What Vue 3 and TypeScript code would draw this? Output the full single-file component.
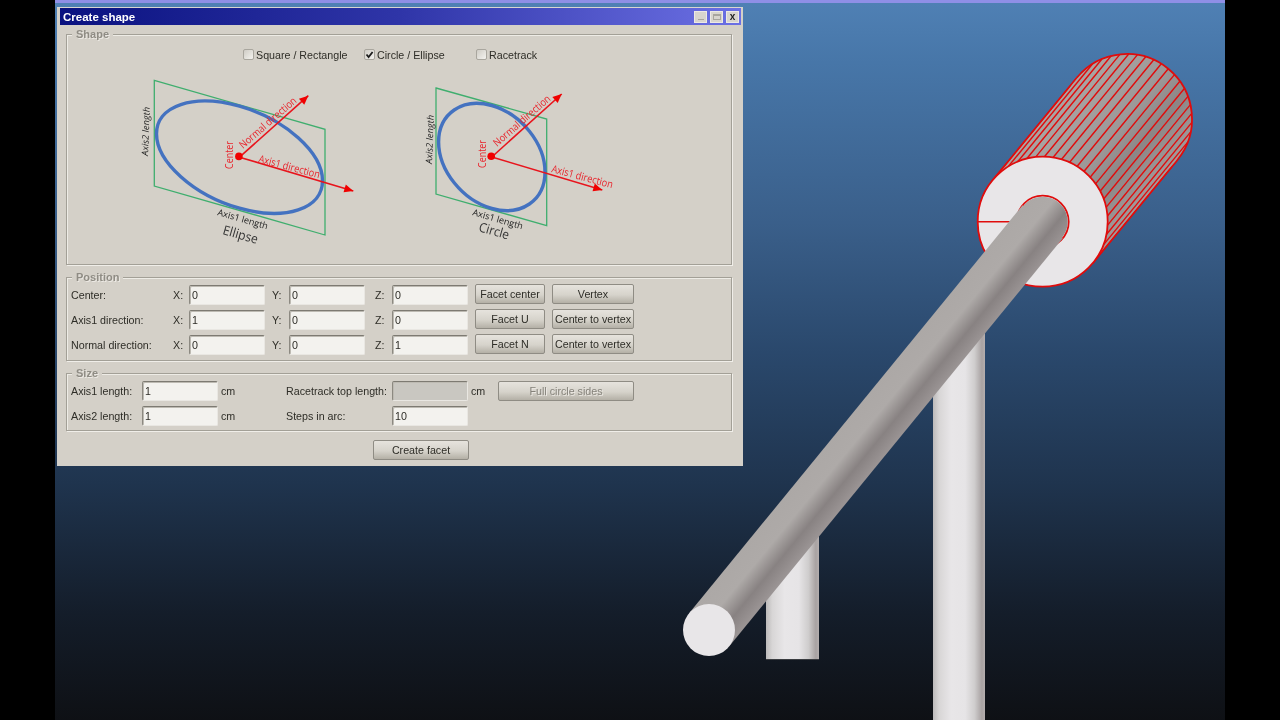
<script setup lang="ts">
	interface Label {
		text: string;
		x: number;
		y: number;
		rot: number;
		size: number;
		len: number;
		kind: string;
	}

	interface Diagram {
		box: string;
		cx: number;
		cy: number;
		ux: number;
		uy: number;
		vy: number;
		normal: [number, number];
		axis: [number, number];
		labels: Label[];
	}

	const diagrams: Diagram[] = [
		{
			box: "154.3,80.3 325,129.3 325,235 154.3,186",
			cx: 239.5,
			cy: 157.2,
			ux: 83,
			uy: 23.5,
			vy: 51,
			normal: [308.3, 95.7],
			axis: [353.3, 191],
			labels: [
				{ text: "Normal direction", x: 243, y: 149, rot: -41, size: 10.5, len: 72, kind: "red" },
				{ text: "Axis1 direction", x: 258, y: 162, rot: 15, size: 10.5, len: 63, kind: "red" },
				{ text: "Center", x: 233, y: 169, rot: -90, size: 10.5, len: 28, kind: "red" },
				{ text: "Axis2 length", x: 148, y: 156, rot: -88, size: 9, len: 49, kind: "slant" },
				{ text: "Axis1 length", x: 217, y: 215, rot: 16, size: 9, len: 52, kind: "dark" },
				{ text: "Ellipse", x: 222, y: 234, rot: 16, size: 13, len: 36, kind: "name" },
			],
		},
		{
			box: "436,88 546.7,119 546.7,225.7 436,194",
			cx: 491.8,
			cy: 157,
			ux: 53.2,
			uy: 15,
			vy: 51.5,
			normal: [561.7, 94],
			axis: [602.3, 190],
			labels: [
				{ text: "Normal direction", x: 497, y: 147, rot: -41, size: 10.5, len: 72, kind: "red" },
				{ text: "Axis1 direction", x: 551, y: 172, rot: 15, size: 10.5, len: 63, kind: "red" },
				{ text: "Center", x: 486, y: 168, rot: -90, size: 10.5, len: 28, kind: "red" },
				{ text: "Axis2 length", x: 432, y: 164, rot: -88, size: 9, len: 49, kind: "slant" },
				{ text: "Axis1 length", x: 472, y: 215, rot: 16, size: 9, len: 52, kind: "dark" },
				{ text: "Circle", x: 478, y: 231, rot: 16, size: 13, len: 31, kind: "name" },
			],
		},
	];

	const position_rows = [
		{ label: "Center:", x: "0", y: "0", z: "0", b1: "Facet center", b2: "Vertex" },
		{ label: "Axis1 direction:", x: "1", y: "0", z: "0", b1: "Facet U", b2: "Center to vertex" },
		{ label: "Normal direction:", x: "0", y: "0", z: "1", b1: "Facet N", b2: "Center to vertex" },
	];

	function arrow_head(from: number[], to: number[]): string {
		const a = Math.atan2(to[1] - from[1], to[0] - from[0]);
		const l = 9;
		const w = 4;
		const bx = to[0] - l * Math.cos(a);
		const by = to[1] - l * Math.sin(a);
		const px = w * Math.sin(a);
		const py = w * Math.cos(a);
		return `${to[0]},${to[1]} ${bx + px},${by - py} ${bx - px},${by + py}`;
	}

	// the sleeve: front cap and back cap share a radius, wires run between them
	const front = { x: 1042.7, y: 221.7 };
	const back = { x: 1127, y: 119 };
	const radius = 65;
	const axis_len = Math.hypot(back.x - front.x, back.y - front.y);
	const dir = { x: (back.x - front.x) / axis_len, y: (back.y - front.y) / axis_len };
	const perp = { x: -dir.y, y: dir.x };

	// wires are spaced somewhere between even and true cylinder projection
	const wire_count = 20;
	const sleeve_wires = Array.from({ length: wire_count + 1 }, (_, i) => {
		const t = i / wire_count;
		const s = 0.55 * Math.sin(-Math.PI / 2 + t * Math.PI) + 0.45 * (2 * t - 1);
		const c = Math.sqrt(Math.max(0, 1 - s * s));
		const ox = radius * (c * dir.x + s * perp.x);
		const oy = radius * (c * dir.y + s * perp.y);
		return { x1: front.x + ox, y1: front.y + oy, x2: back.x + ox, y2: back.y + oy };
	});

	const sleeve_body = [
		[front.x + perp.x * radius, front.y + perp.y * radius],
		[back.x + perp.x * radius, back.y + perp.y * radius],
		[back.x - perp.x * radius, back.y - perp.y * radius],
		[front.x - perp.x * radius, front.y - perp.y * radius],
	]
		.map((p) => p.join(","))
		.join(" ");

	const rod_r = 26;
	const rod_end = { x: 709, y: 630 };
	const rod_body = [
		[rod_end.x + perp.x * rod_r, rod_end.y + perp.y * rod_r],
		[front.x + perp.x * rod_r, front.y + perp.y * rod_r],
		[front.x - perp.x * rod_r, front.y - perp.y * rod_r],
		[rod_end.x - perp.x * rod_r, rod_end.y - perp.y * rod_r],
	]
		.map((p) => p.join(","))
		.join(" ");
</script>

<template>
	<div class="screen">
		<div class="viewport">
			<svg class="scene" viewBox="55 0 1170 720" width="1170" height="720">
				<defs>
					<linearGradient id="pillar" x1="0" x2="1" y1="0" y2="0">
						<stop offset="0" stop-color="#bcbaba" />
						<stop offset="0.12" stop-color="#d8d6d6" />
						<stop offset="0.35" stop-color="#e8e6e8" />
						<stop offset="0.62" stop-color="#e6e4e6" />
						<stop offset="0.8" stop-color="#cfcdcd" />
						<stop offset="0.94" stop-color="#a8a2a2" />
						<stop offset="1" stop-color="#b4aeae" />
					</linearGradient>
					<linearGradient
						id="rod"
						gradientUnits="userSpaceOnUse"
						:x1="front.x - perp.x * rod_r"
						:y1="front.y - perp.y * rod_r"
						:x2="front.x + perp.x * rod_r"
						:y2="front.y + perp.y * rod_r"
					>
						<stop offset="0" stop-color="#aca8a6" />
						<stop offset="0.4" stop-color="#aeaaa8" />
						<stop offset="0.72" stop-color="#888282" />
						<stop offset="1" stop-color="#9a9494" />
					</linearGradient>
					<linearGradient
						id="sleeve"
						gradientUnits="userSpaceOnUse"
						:x1="front.x - perp.x * radius"
						:y1="front.y - perp.y * radius"
						:x2="front.x + perp.x * radius"
						:y2="front.y + perp.y * radius"
					>
						<stop offset="0" stop-color="#aaa6a4" />
						<stop offset="0.5" stop-color="#9c9898" />
						<stop offset="0.72" stop-color="#8c8686" />
						<stop offset="1" stop-color="#a29c9c" />
					</linearGradient>
				</defs>

				<rect x="766" y="530" width="53" height="129" fill="url(#pillar)" />
				<line x1="766" y1="659.5" x2="819" y2="659.5" stroke="#3a3c40" stroke-width="1" />
				<rect x="933" y="320" width="52" height="400" fill="url(#pillar)" />

				<polygon :points="sleeve_body" fill="url(#sleeve)" stroke="#e00c0c" stroke-width="1.5" />
				<circle :cx="back.x" :cy="back.y" :r="radius" fill="url(#sleeve)" />
				<line
					v-for="(w, i) in sleeve_wires"
					:key="i"
					:x1="w.x1"
					:y1="w.y1"
					:x2="w.x2"
					:y2="w.y2"
					stroke="#e00c0c"
					stroke-width="1.4"
				/>
				<path
					:d="`M${back.x + perp.x * radius} ${back.y + perp.y * radius} A${radius} ${radius} 0 0 0 ${back.x - perp.x * radius} ${back.y - perp.y * radius}`"
					fill="none"
					stroke="#e00c0c"
					stroke-width="1.8"
				/>

				<circle :cx="front.x" :cy="front.y" :r="radius" fill="#e8e6e8" stroke="#e00c0c" stroke-width="1.8" />
				<line x1="978" y1="221.7" x2="1012" y2="221.7" stroke="#e00c0c" stroke-width="1.5" />
				<circle :cx="front.x" :cy="front.y" :r="rod_r" fill="#e8e6e8" stroke="#e00c0c" stroke-width="1.8" />

				<polygon :points="rod_body" fill="url(#rod)" />
				<circle :cx="front.x" :cy="front.y" :r="rod_r - 1" fill="url(#rod)" />
				<circle :cx="rod_end.x" :cy="rod_end.y" :r="rod_r" fill="#e8e6e8" />
			</svg>

			<div class="dialog">
				<div class="titlebar">
					<span class="title">Create shape</span>
					<div class="win_buttons">
						<span class="win_btn faded"><i class="glyph_min"></i></span>
						<span class="win_btn faded"><i class="glyph_max"></i></span>
						<span class="win_btn close">x</span>
					</div>
				</div>

				<div class="body">
					<section class="group group_shape">
						<span class="legend">Shape</span>
						<div class="checks">
							<label class="check"><span class="box"></span>Square / Rectangle</label>
							<label class="check">
								<span class="box">
									<svg viewBox="0 0 11 11" width="11" height="11">
										<path d="M2.5 5.5 L4.6 8 L8.6 3" fill="none" stroke="#1c1c1c" stroke-width="1.8" />
									</svg>
								</span>
								Circle / Ellipse
							</label>
							<label class="check"><span class="box"></span>Racetrack</label>
						</div>
						<svg class="diagram" viewBox="67 65 664 199" width="664" height="199">
							<g v-for="d in diagrams" :key="d.box">
								<polygon :points="d.box" fill="none" stroke="#3fae6e" stroke-width="1.3" />
								<ellipse
									cx="0"
									cy="0"
									rx="1"
									ry="1"
									fill="none"
									stroke="#4472c0"
									stroke-width="3.4"
									vector-effect="non-scaling-stroke"
									:transform="`matrix(${d.ux} ${d.uy} 0 ${d.vy} ${d.cx} ${d.cy})`"
								/>
								<line :x1="d.cx" :y1="d.cy" :x2="d.normal[0]" :y2="d.normal[1]" stroke="#e8141c" stroke-width="1.6" />
								<line :x1="d.cx" :y1="d.cy" :x2="d.axis[0]" :y2="d.axis[1]" stroke="#e8141c" stroke-width="1.6" />
								<polygon :points="arrow_head([d.cx, d.cy], d.normal)" fill="#f00000" />
								<polygon :points="arrow_head([d.cx, d.cy], d.axis)" fill="#f00000" />
								<circle :cx="d.cx - 0.6" :cy="d.cy - 0.8" r="3.8" fill="#f00000" />
								<text
									v-for="t in d.labels"
									:key="t.text"
									:class="['tag', t.kind]"
									:font-size="t.size"
									:textLength="t.len"
									lengthAdjust="spacingAndGlyphs"
									:transform="`translate(${t.x} ${t.y}) rotate(${t.rot})`"
								>{{ t.text }}</text>
							</g>
						</svg>
					</section>

					<section class="group group_position">
						<span class="legend">Position</span>
						<div class="pos_grid">
							<template v-for="row in position_rows" :key="row.label">
								<span>{{ row.label }}</span>
								<span>X:</span>
								<input class="field" :value="row.x" readonly />
								<span class="axis_y">Y:</span>
								<input class="field" :value="row.y" readonly />
								<span class="axis_z">Z:</span>
								<input class="field" :value="row.z" readonly />
								<button class="btn">{{ row.b1 }}</button>
								<button class="btn">{{ row.b2 }}</button>
							</template>
						</div>
					</section>

					<section class="group group_size">
						<span class="legend">Size</span>
						<div class="size_grid">
							<span>Axis1 length:</span>
							<input class="field" value="1" readonly />
							<span class="unit">cm</span>
							<span>Racetrack top length:</span>
							<input class="field off" disabled />
							<span class="unit">cm</span>
							<button class="btn off" disabled>Full circle sides</button>

							<span>Axis2 length:</span>
							<input class="field" value="1" readonly />
							<span class="unit">cm</span>
							<span>Steps in arc:</span>
							<input class="field" value="10" readonly />
						</div>
					</section>

					<div class="footer">
						<button class="btn create">Create facet</button>
					</div>
				</div>
			</div>
		</div>
	</div>
</template>

<style>
	html,
	body {
		margin: 0;
		background: #000;
	}
</style>

<style scoped>
	.screen {
		display: flex;
		justify-content: center;
		width: 1280px;
		height: 720px;
		overflow: hidden;
		background: #000;
		font-family: "Liberation Sans", Arial, sans-serif;
		font-size: 10.7px;
		color: #2e2d27;
	}

	.viewport {
		position: relative;
		width: 1170px;
		height: 720px;
		background: linear-gradient(
			180deg,
			#4f80b4 0,
			#4776a8 60px,
			#3a5f8a 220px,
			#2a486c 350px,
			#1f344e 480px,
			#141d2a 610px,
			#0e1014 720px
		);
		border-top: 3px solid #8f8fe6;
		box-sizing: border-box;
	}

	.scene {
		position: absolute;
		left: 0;
		top: -3px;
	}

	.dialog {
		position: absolute;
		left: 2px;
		top: 4px;
		width: 686px;
		height: 459px;
		box-sizing: border-box;
		padding: 0 2px 0 3px;
		background: #d4d0c8;
		border-top: 1px solid #d8d6d0;
		filter: blur(0.45px);
	}

	.titlebar {
		display: flex;
		align-items: center;
		justify-content: space-between;
		height: 17px;
		padding: 0 2px 0 3px;
		background: linear-gradient(90deg, #0a1280 0, #2f35a8 50%, #6c70e4 100%);
	}

	.title {
		color: #fff;
		font-weight: bold;
		font-size: 11.5px;
	}

	.win_buttons {
		display: flex;
		gap: 3px;
	}

	.win_btn {
		display: flex;
		align-items: center;
		justify-content: center;
		width: 13px;
		height: 12px;
		background: #d8d5ce;
		border: 1px solid #ece9e4;
		box-sizing: border-box;
	}

	.glyph_min {
		width: 6px;
		height: 1px;
		margin-top: 6px;
		background: #a8a59e;
	}

	.glyph_max {
		width: 8px;
		height: 6px;
		border: 1px solid #a8a59e;
		border-top-width: 2px;
		box-sizing: border-box;
	}

	.close {
		font-size: 10px;
		font-weight: bold;
		line-height: 8px;
		color: #222;
	}

	.body {
		display: flex;
		flex-direction: column;
		padding: 9px 9px 0 6px;
	}

	.group {
		position: relative;
		box-sizing: border-box;
		border: 1px solid #a3a097;
		box-shadow: 1px 1px 0 #f0eee9, inset 1px 1px 0 #eeece6;
	}

	.group_shape {
		height: 231px;
		margin-bottom: 12px;
	}

	.group_position {
		height: 84px;
		padding: 7px 0 0 4px;
		margin-bottom: 12px;
	}

	.group_size {
		height: 58px;
		padding: 7px 0 0 4px;
	}

	.legend {
		position: absolute;
		left: 5px;
		top: -7px;
		padding: 0 4px;
		background: #d4d0c8;
		color: #8f8c84;
		font-weight: bold;
		font-size: 11px;
		line-height: 13px;
		text-shadow: 1px 1px 0 #ece9e4;
	}

	.checks {
		display: grid;
		grid-template-columns: 121px 112px auto;
		padding: 13px 0 0 176px;
		height: 17px;
	}

	.check {
		display: flex;
		align-items: center;
		gap: 2px;
		height: 13px;
	}

	.box {
		display: block;
		width: 11px;
		height: 11px;
		box-sizing: border-box;
		border: 1px solid #a9a69e;
		border-radius: 2px;
		background: linear-gradient(135deg, #cfccc5, #f4f3ef);
		line-height: 0;
	}

	.box svg {
		margin: -1px;
	}

	.diagram {
		display: block;
	}

	.tag {
		font-family: "Open Sans", "Liberation Sans", sans-serif;
	}

	.red {
		fill: #e8242c;
	}

	.dark {
		fill: #222;
	}

	.slant {
		fill: #222;
		font-style: italic;
	}

	.name {
		fill: #333;
	}

	.pos_grid {
		display: grid;
		grid-template-columns: 102px 16px 76px 24px 76px 27px 76px 77px 89px;
		grid-auto-rows: 20px;
		row-gap: 5px;
		align-items: center;
	}

	.axis_y {
		padding-left: 7px;
	}

	.axis_z {
		padding-left: 10px;
	}

	.pos_grid .btn {
		margin: -2px 0 0 7px;
		width: calc(100% - 7px);
	}

	.size_grid {
		display: grid;
		grid-template-columns: 71px 76px 68px 106px 76px 30px 136px;
		grid-auto-rows: 20px;
		row-gap: 5px;
		align-items: center;
	}

	.unit {
		padding-left: 3px;
	}

	.field {
		width: 76px;
		height: 20px;
		box-sizing: border-box;
		padding: 0 2px;
		border: 1px solid #e9e7e2;
		border-top-color: #7d7a72;
		border-left-color: #8c8981;
		border-radius: 2px;
		background: #f3f2ee;
		box-shadow: inset 1px 1px 0 #bdbab2;
		font: inherit;
		color: #2e2d27;
		outline: none;
	}

	.field.off {
		background: #c9c7c1;
	}

	.btn {
		height: 20px;
		padding: 0;
		box-sizing: border-box;
		border: 1px solid #8f8c84;
		border-radius: 2px;
		background: linear-gradient(180deg, #e6e3dd 0, #d6d3cb 55%, #b4b0a6 100%);
		font: inherit;
		color: #2e2d27;
		white-space: nowrap;
	}

	.btn.off {
		color: #85827a;
		text-shadow: 1px 1px 0 #ece9e4;
	}

	.footer {
		display: flex;
		padding: 9px 0 0 307px;
	}

	.create {
		width: 96px;
	}
</style>
